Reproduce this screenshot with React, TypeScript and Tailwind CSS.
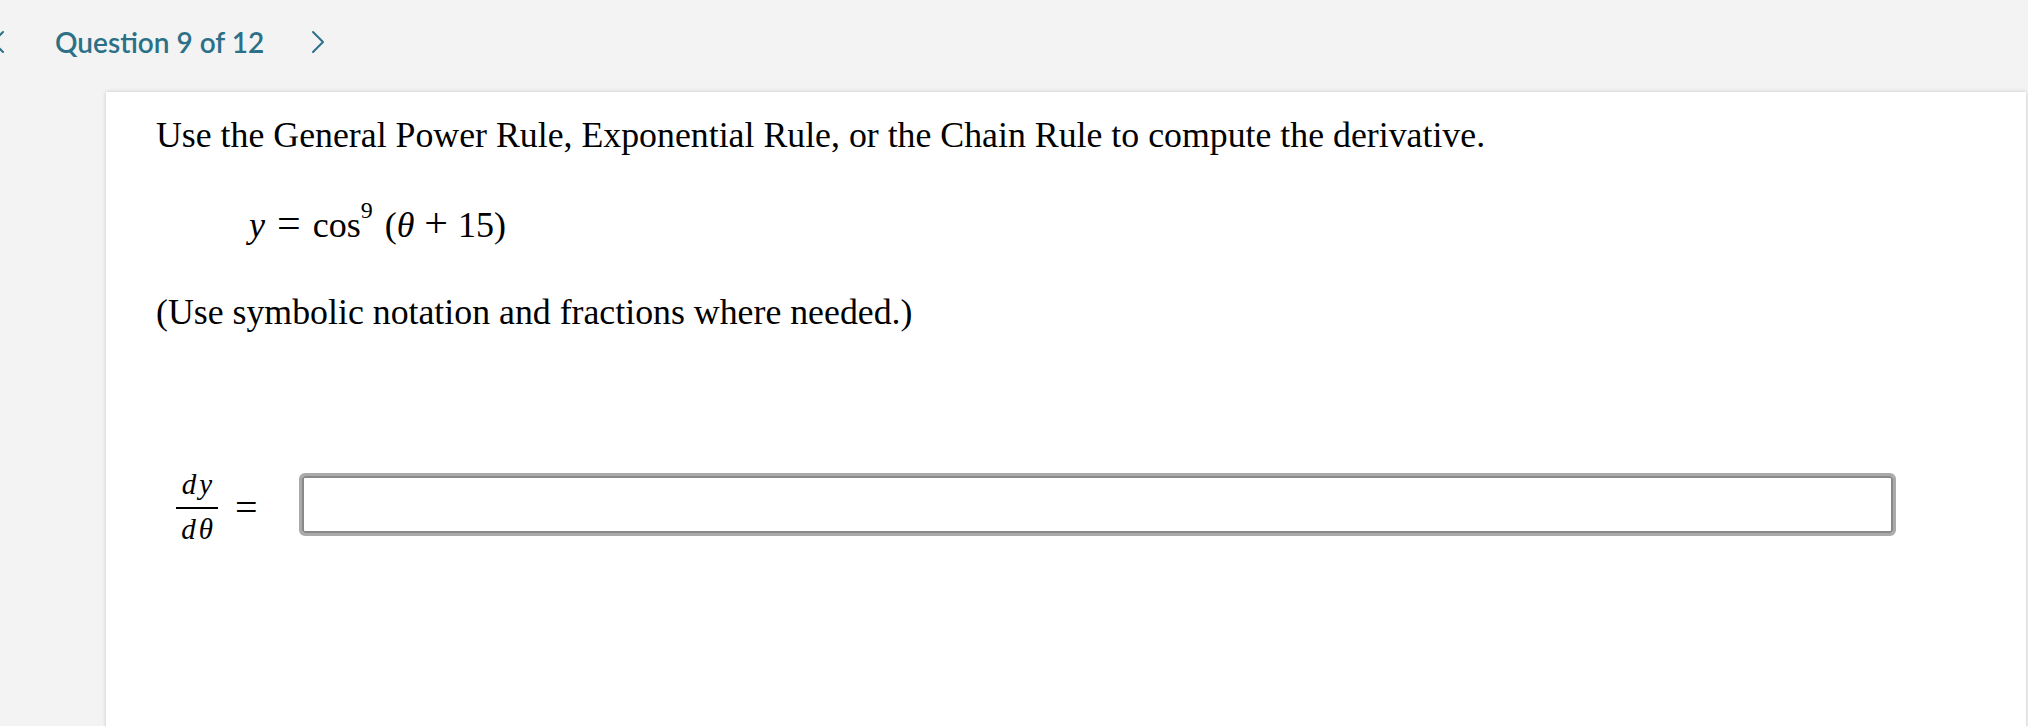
import React from 'react'

const serif = { fontFamily: '"Liberation Serif", "Times New Roman", serif' }

function Chevron({ dir }: { dir: 'left' | 'right' }) {
  return (
    <svg width="14" height="24" viewBox="0 0 14 24" fill="none" className="shrink-0">
      <path
        d={dir === 'right' ? 'M2 2 L12 12 L2 22' : 'M12 2 L2 12 L12 22'}
        stroke="#2c7088"
        strokeWidth="2"
        strokeLinecap="round"
        strokeLinejoin="round"
      />
    </svg>
  )
}

export default function App() {
  return (
    <div className="min-h-screen bg-[#f3f3f3] overflow-hidden">
      {/* question navigation */}
      <div className="h-[92px] flex items-start pt-[22px]">
        <div className="flex items-center h-[40px]">
          <div className="-ml-[9px]">
            <Chevron dir="left" />
          </div>
          <span
            className="ml-[50px] text-[28px] font-semibold text-[#2c7088] leading-[34px]"
            style={{ fontFamily: 'Lato, "Open Sans", sans-serif' }}
          >
            Question 9 of 12
          </span>
          <div className="ml-[47px]">
            <Chevron dir="right" />
          </div>
        </div>
      </div>

      {/* question card */}
      <div
        className="ml-[106px] w-[1920px] h-[640px] bg-white shadow-[0_0_4px_rgba(0,0,0,0.18)] pl-[50px] pt-[23px] text-black"
        style={serif}
      >
        <p className="text-[35.8px] leading-[40px] whitespace-nowrap">
          Use the General Power Rule, Exponential Rule, or the Chain Rule to compute the derivative.
        </p>

        <p className="mt-[50px] ml-[93px] h-[40px] text-[36px] leading-[40px] whitespace-nowrap">
          <i>y</i>
          <span className="mx-[12px] text-[42px] leading-[0px]">=</span>
          cos<sup className="text-[24px] leading-[0px] -top-[19px]">9</sup>
          <span className="ml-[12px]">(</span>
          <i>θ</i>
          <span className="mx-[10px] text-[42px] leading-[0px]">+</span>
          15)
        </p>

        <p className="mt-[47px] text-[35.8px] leading-[40px] whitespace-nowrap">
          (Use symbolic notation and fractions where needed.)
        </p>

        {/* answer row */}
        <div className="mt-[139px] ml-[20px] flex items-start">
          <div className="flex flex-col items-center w-[42px] text-[29px] italic leading-[30px]">
            <span className="tracking-[3px] pl-[3px] -mt-[2px]">dy</span>
            <span className="w-full h-[2px] bg-black mt-[8px] mb-[5px]" />
            <span className="tracking-[3px] pl-[3px]">dθ</span>
          </div>
          <span className="ml-[17px] mt-[17px] text-[40px] leading-[40px]">=</span>
          <div className="ml-[41px] mt-[2px] w-[1597px] h-[63px] rounded-[6px] border-[3px] border-[#aaaaaa] shadow-[inset_0_0_0_2px_#888888] bg-white" />
        </div>
      </div>
    </div>
  )
}
